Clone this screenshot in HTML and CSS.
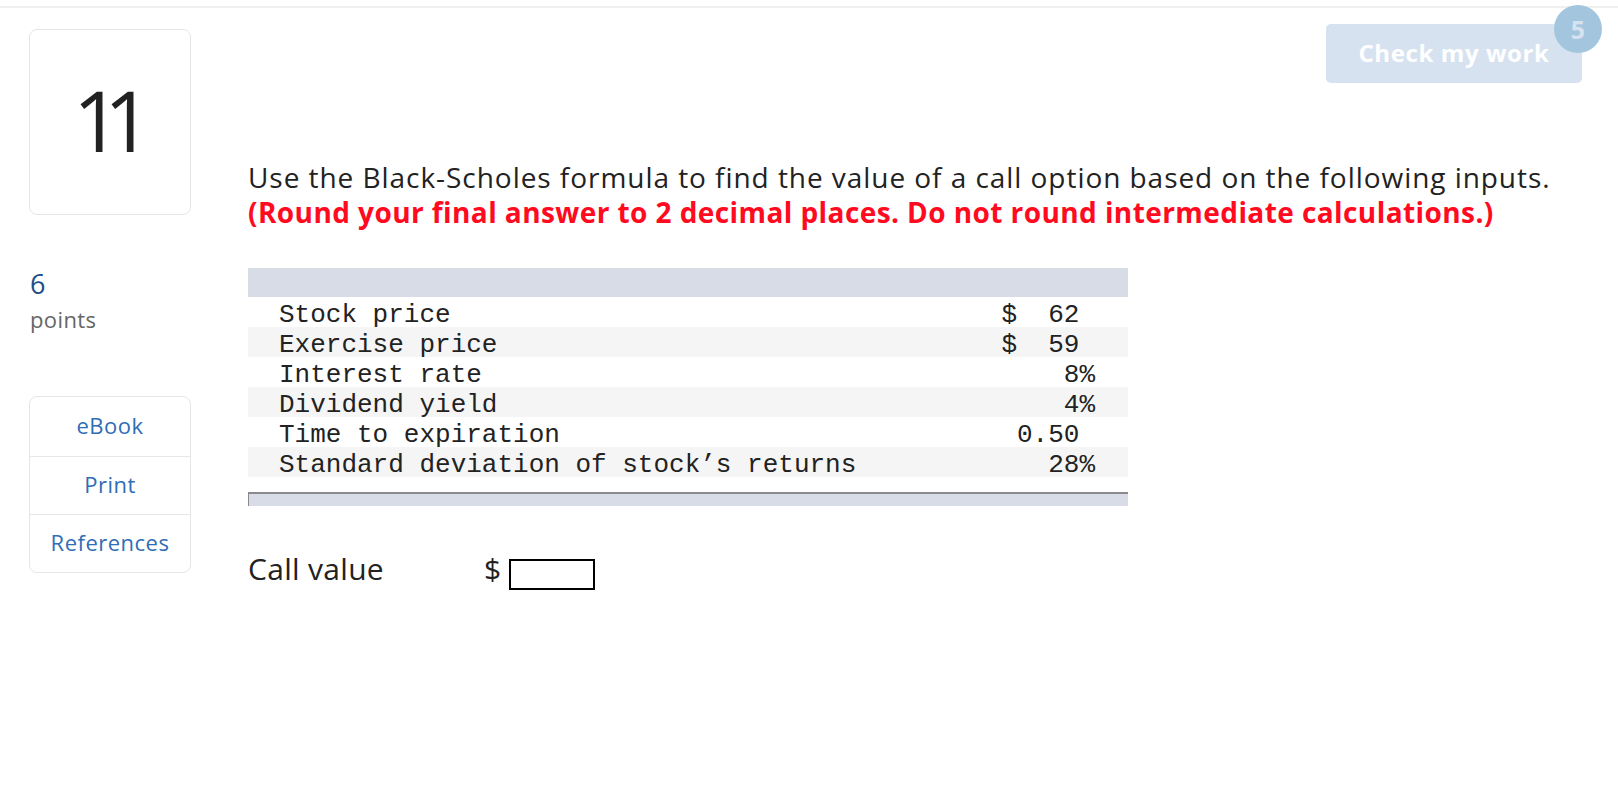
FILE: index.html
```html
<!DOCTYPE html>
<html>
<head>
<meta charset="utf-8">
<link rel="stylesheet" href="styles.css">
</head>
<body>
<div class="topline"></div>
<div class="page">
  <aside class="sidebar">
    <div class="qnum">11</div>
    <div class="points">
      <div class="points-num">6</div>
      <div class="points-label">points</div>
    </div>
    <div class="links">
      <a class="link">eBook</a>
      <a class="link">Print</a>
      <a class="link">References</a>
    </div>
  </aside>
  <main class="main">
    <div class="toolbar">
      <button class="check">Check my work<span class="badge">5</span></button>
    </div>
    <p class="prompt">Use the Black-Scholes formula to find the value of a call option based on the following inputs.<br><span class="warn">(Round your final answer to 2 decimal places. Do not round intermediate calculations.)</span></p>
    <div class="datatable">
      <div class="dt-head"></div>
      <div class="dt-row"><span class="dt-label">Stock price</span><span class="dt-val">$  62 </span></div>
      <div class="dt-row alt"><span class="dt-label">Exercise price</span><span class="dt-val">$  59 </span></div>
      <div class="dt-row"><span class="dt-label">Interest rate</span><span class="dt-val">8%</span></div>
      <div class="dt-row alt"><span class="dt-label">Dividend yield</span><span class="dt-val">4%</span></div>
      <div class="dt-row"><span class="dt-label">Time to expiration</span><span class="dt-val">0.50 </span></div>
      <div class="dt-row alt"><span class="dt-label">Standard deviation of stock’s returns</span><span class="dt-val">28%</span></div>
      <div class="dt-foot"></div>
    </div>
    <div class="answer">
      <span class="answer-label">Call value</span>
      <span class="answer-cur">$</span>
      <span class="answer-box"></span>
    </div>
  </main>
</div>
</body>
</html>
```
FILE: styles.css
```css
html, body {
  margin: 0;
  padding: 0;
  background: #fff;
}
body {
  font-family: "Open Sans", Lato, sans-serif;
  font-variant-ligatures: none;
  color: #222;
}
.topline {
  height: 6px;
  border-bottom: 2px solid #efefef;
}
.page {
  display: flex;
  padding-left: 29px;
}
.sidebar {
  width: 162px;
  flex: none;
  display: flex;
  flex-direction: column;
}
.qnum {
  margin-top: 21px;
  height: 186px;
  border: 1px solid #e6e6e6;
  border-radius: 8px;
  box-sizing: border-box;
  display: flex;
  align-items: center;
  justify-content: center;
  font-size: 84px;
  letter-spacing: -17px;
  color: #222;
  padding: 0 12px 6px 0;
}
.points {
  margin-top: 53px;
  padding-left: 1px;
}
.points-num {
  font-size: 27px;
  line-height: 32px;
  color: #1d4e89;
}
.points-label {
  margin-top: 4px;
  font-size: 22px;
  letter-spacing: 0.4px;
  line-height: 30px;
  color: #666;
}
.links {
  margin-top: 62px;
  border: 1px solid #e6e6e6;
  border-radius: 8px;
  display: flex;
  flex-direction: column;
}
.link {
  height: 58px;
  display: flex;
  align-items: center;
  justify-content: center;
  font-size: 22px;
  letter-spacing: 0.5px;
  color: #2f6db5;
  border-top: 1px solid #e6e6e6;
  padding-bottom: 3px;
  box-sizing: border-box;
}
.link:first-child {
  border-top: none;
  height: 59px;
}
.main {
  flex: 1;
  margin-left: 57px;
  padding-right: 36px;
}
.toolbar {
  display: flex;
  justify-content: flex-end;
  margin-top: 16px;
}
.check {
  position: relative;
  width: 256px;
  height: 59px;
  border: none;
  border-radius: 5px;
  background: #d6e2f0;
  color: #fff;
  font-family: "Open Sans", sans-serif;
  font-weight: 700;
  font-size: 24px;
  letter-spacing: 0.6px;
  padding: 0 0 2px 0;
}
.badge {
  position: absolute;
  right: -20px;
  top: -19px;
  width: 48px;
  height: 48px;
  border-radius: 50%;
  background: #a3c6de;
  color: #d6e2f0;
  font-size: 25px;
  letter-spacing: 0;
  font-weight: 700;
  display: flex;
  align-items: center;
  justify-content: center;
}
.prompt {
  margin: 77px 0 0 0;
  font-size: 28px;
  line-height: 35px;
  letter-spacing: 0.95px;
  color: #222;
}
.warn {
  color: #ff0a1e;
  font-weight: 700;
  letter-spacing: 0.42px;
}
.datatable {
  margin-top: 38px;
  width: 880px;
  font-family: "Liberation Mono", "DejaVu Sans Mono", monospace;
  font-size: 26px;
  color: #222;
}
.dt-head {
  height: 29px;
  background: #d8dce6;
}
.dt-row {
  height: 30px;
  box-sizing: border-box;
  padding: 4px 33px 0 31px;
  line-height: 28px;
  display: flex;
  justify-content: space-between;
  white-space: pre;
}
.dt-row.alt {
  background: #f5f5f5;
}
.dt-foot {
  margin-top: 15px;
  height: 12px;
  background: #d8dce6;
  border-top: 2px solid #8a8a8a;
  border-left: 1px solid #8a8a8a;
}
.answer {
  margin-top: 42px;
  display: flex;
  align-items: flex-start;
  font-size: 30px;
  line-height: 41px;
}
.answer-label {
  width: 236px;
  letter-spacing: 0.3px;
}
.answer-cur {
  margin-right: 8px;
}
.answer-box {
  margin-top: 11px;
  width: 82px;
  height: 27px;
  border: 2px solid #000;
}
```
